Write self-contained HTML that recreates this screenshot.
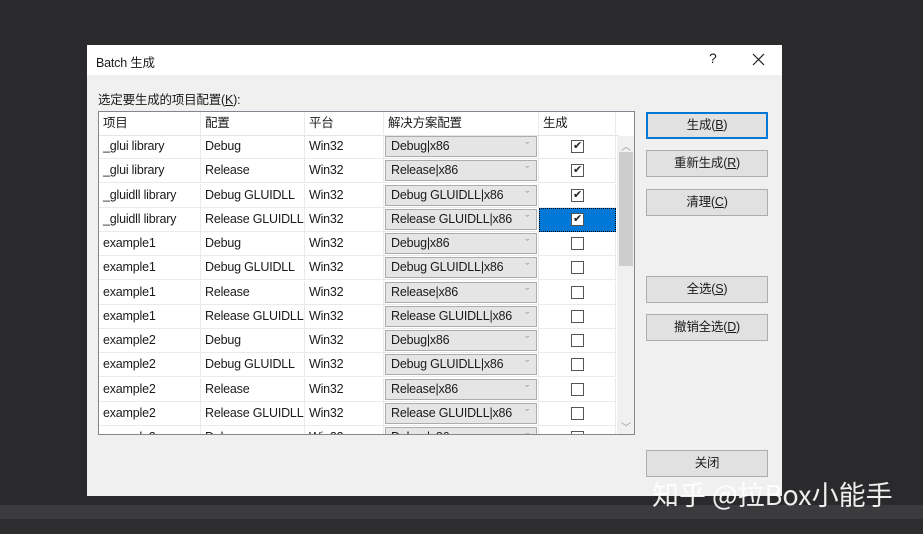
<!DOCTYPE html>
<html><head><meta charset="utf-8"><style>
*{margin:0;padding:0;box-sizing:border-box}
body{width:923px;height:534px;background:#2a2a2c;position:relative;overflow:hidden;font-family:"Liberation Sans","Noto Sans CJK SC",sans-serif;font-size:12.5px;letter-spacing:-0.2px;color:#1a1a1a}
.a{position:absolute}
.dlg{left:87px;top:45px;width:695px;height:451px;background:#f0f0f0}
.tb{left:0;top:0;width:695px;height:30px;background:#fff}
.tbl{left:98px;top:111px;width:537px;height:324px;border:1px solid #828790;background:#fff;overflow:hidden}
.hd{top:0;height:24px;width:520px;background:#fff;border-bottom:1px solid #e5e5e5}
.c{position:absolute;height:24px;line-height:23px;padding-left:4px;white-space:nowrap;overflow:hidden;border-right:1px solid #eaeaea;border-bottom:1px solid #eaeaea}
.dd{position:absolute;left:286px;width:152px;height:21px;top:1px;background:#e5e5e5;border:1px solid #acacac;line-height:19px;padding-left:5px;white-space:nowrap}
.dd:after{content:"ˇ";position:absolute;right:7px;top:1px;color:#888;font-size:11px}
.cb{position:absolute;left:472px;top:5px;width:13px;height:13px;border:1px solid #555;background:#fff;font-size:11px;line-height:11px;text-align:center;color:#222}
.btn{position:absolute;left:646px;width:122px;height:27px;background:#e1e1e1;border:1px solid #adadad;text-align:center;line-height:25px}
</style></head><body>
<div class="a" style="left:0;top:505px;width:923px;height:14px;background:#3b3b3e"></div>
<div class="a" style="left:0;top:519px;width:923px;height:15px;background:#2e2e30"></div>
<div class="a dlg">
 <div class="a tb"><span class="a" style="left:9px;top:7px">Batch 生成</span>
 <span class="a" style="left:622px;top:5px;font-size:14px">?</span>
 <svg class="a" style="left:665px;top:8px" width="13" height="13"><path d="M1 1L12 12M12 1L1 12" stroke="#222" stroke-width="1.2"/></svg></div>
 <span class="a" style="left:11px;top:44px">选定要生成的项目配置(<u>K</u>):</span>
</div>
<div class="a tbl">
 <div class="a hd">
  <div class="c" style="left:0;width:102px;border-bottom:0">项目</div>
  <div class="c" style="left:102px;width:104px;border-bottom:0">配置</div>
  <div class="c" style="left:206px;width:79px;border-bottom:0">平台</div>
  <div class="c" style="left:285px;width:155px;border-bottom:0">解决方案配置</div>
  <div class="c" style="left:440px;width:77px;border-bottom:0">生成</div>
 </div>
 <div class="a" style="left:518px;top:24px;width:17px;height:300px;background:#f0f0f0">
  <div class="a" style="left:2px;top:16px;width:14px;height:114px;background:#cdcdcd"></div>
  <span class="a" style="left:4px;top:2px;color:#999;font-size:10px">︿</span>
  <span class="a" style="left:4px;bottom:2px;color:#999;font-size:10px">﹀</span>
 </div>
 <div id="rows"></div>
</div>
<div class="btn" style="top:112px;border:2px solid #0078d7;line-height:23px">生成(<u>B</u>)</div>
<div class="btn" style="top:150px">重新生成(<u>R</u>)</div>
<div class="btn" style="top:189px">清理(<u>C</u>)</div>
<div class="btn" style="top:276px">全选(<u>S</u>)</div>
<div class="btn" style="top:314px">撤销全选(<u>D</u>)</div>
<div class="btn" style="top:450px">关闭</div>
<div class="a" style="left:652px;top:474px;color:#fff;font-size:27px;letter-spacing:0;font-family:'Noto Sans CJK SC',sans-serif;opacity:.92;white-space:nowrap">知乎 @拉Box小能手</div>
<script>
var d=[["_glui library","Debug","Debug|x86",1],["_glui library","Release","Release|x86",1],["_gluidll library","Debug GLUIDLL","Debug GLUIDLL|x86",1],["_gluidll library","Release GLUIDLL","Release GLUIDLL|x86",2],["example1","Debug","Debug|x86",0],["example1","Debug GLUIDLL","Debug GLUIDLL|x86",0],["example1","Release","Release|x86",0],["example1","Release GLUIDLL","Release GLUIDLL|x86",0],["example2","Debug","Debug|x86",0],["example2","Debug GLUIDLL","Debug GLUIDLL|x86",0],["example2","Release","Release|x86",0],["example2","Release GLUIDLL","Release GLUIDLL|x86",0],["example3","Debug","Debug|x86",0]];
var h="";d.forEach(function(r,i){var t=23+i*24.25;
h+='<div class="a" style="left:0;top:'+t+'px;width:518px;height:24px">'+
'<div class="c" style="left:0;width:102px">'+r[0]+'</div><div class="c" style="left:102px;width:104px">'+r[1]+'</div><div class="c" style="left:206px;width:79px">Win32</div><div class="c" style="left:285px;width:155px"></div>'+
'<div class="c" style="left:440px;width:77px;'+(r[3]==2?'background:#0078d7;border:1px dotted #000;':'')+'"></div>'+
'<div class="dd">'+r[2]+'</div><div class="cb">'+(r[3]?'✔':'')+'</div></div>';});
document.getElementById("rows").innerHTML=h;
</script>
</body></html>
